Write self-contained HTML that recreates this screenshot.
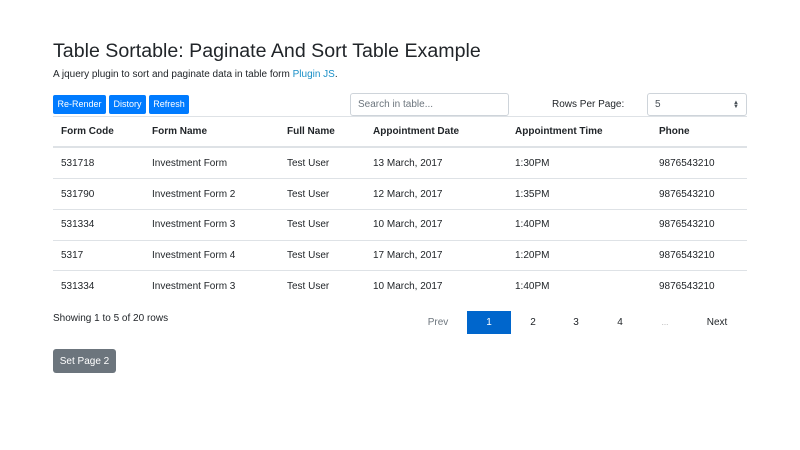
<!DOCTYPE html>
<html><head><meta charset="utf-8"><style>
*{margin:0;padding:0;box-sizing:border-box}
body{width:800px;height:450px;background:#fff;font-family:"Liberation Sans",sans-serif;color:#212529;position:relative;overflow:hidden}
.a{position:absolute;white-space:nowrap}
.btn{position:absolute;background:#007bff;color:#fff;font-size:9px;border-radius:2px;height:19px;line-height:19px;text-align:center;top:95px}
.in{position:absolute;border:1px solid #ced4da;border-radius:3px;top:93px;height:23px;font-size:10px;line-height:21px;padding-left:7px}
.hl{position:absolute;left:53px;width:694px;height:1px;background:#dee2e6}
.c{position:absolute;font-size:10px;line-height:12px;margin-top:2px}
.h{font-weight:bold}
.pg{position:absolute;top:311px;height:23px;line-height:24px;font-size:10px;text-align:center}
</style></head><body>
<div class="a" style="left:53px;top:40px;font-size:19.6px;font-weight:300">Table Sortable: Paginate And Sort Table Example</div>
<div class="a" style="left:53px;top:69px;font-size:10px">A jquery plugin to sort and paginate data in table form <span style="color:#1a8fc7">Plugin JS</span>.</div>
<div class="btn" style="left:53px;width:53px">Re-Render</div>
<div class="btn" style="left:109px;width:37px">Distory</div>
<div class="btn" style="left:149px;width:40px">Refresh</div>
<div class="in" style="left:350px;width:159px;color:#6c757d">Search in table...</div>
<div class="a" style="left:552px;top:99px;font-size:10px">Rows Per Page:</div>
<div class="in" style="left:647px;width:100px;color:#495057">5<span style="position:absolute;right:7px;font-size:6px;line-height:4px;top:7px;text-align:center">&#9650;<br>&#9660;</span></div>
<div class="hl" style="top:116px"></div>
<div class="hl" style="top:146px;height:2px"></div>
<div class="hl" style="top:178px"></div><div class="hl" style="top:209px"></div><div class="hl" style="top:240px"></div><div class="hl" style="top:270px"></div>
<div class="c h" style="left:61px;top:124px">Form Code</div>
<div class="c h" style="left:152px;top:124px">Form Name</div>
<div class="c h" style="left:287px;top:124px">Full Name</div>
<div class="c h" style="left:373px;top:124px">Appointment Date</div>
<div class="c h" style="left:515px;top:124px">Appointment Time</div>
<div class="c h" style="left:659px;top:124px">Phone</div>
<div class="c" style="left:61px;top:156px">531718</div><div class="c" style="left:152px;top:156px">Investment Form</div><div class="c" style="left:287px;top:156px">Test User</div><div class="c" style="left:373px;top:156px">13 March, 2017</div><div class="c" style="left:515px;top:156px">1:30PM</div><div class="c" style="left:659px;top:156px">9876543210</div>
<div class="c" style="left:61px;top:187px">531790</div><div class="c" style="left:152px;top:187px">Investment Form 2</div><div class="c" style="left:287px;top:187px">Test User</div><div class="c" style="left:373px;top:187px">12 March, 2017</div><div class="c" style="left:515px;top:187px">1:35PM</div><div class="c" style="left:659px;top:187px">9876543210</div>
<div class="c" style="left:61px;top:217px">531334</div><div class="c" style="left:152px;top:217px">Investment Form 3</div><div class="c" style="left:287px;top:217px">Test User</div><div class="c" style="left:373px;top:217px">10 March, 2017</div><div class="c" style="left:515px;top:217px">1:40PM</div><div class="c" style="left:659px;top:217px">9876543210</div>
<div class="c" style="left:61px;top:248px">5317</div><div class="c" style="left:152px;top:248px">Investment Form 4</div><div class="c" style="left:287px;top:248px">Test User</div><div class="c" style="left:373px;top:248px">17 March, 2017</div><div class="c" style="left:515px;top:248px">1:20PM</div><div class="c" style="left:659px;top:248px">9876543210</div>
<div class="c" style="left:61px;top:279px">531334</div><div class="c" style="left:152px;top:279px">Investment Form 3</div><div class="c" style="left:287px;top:279px">Test User</div><div class="c" style="left:373px;top:279px">10 March, 2017</div><div class="c" style="left:515px;top:279px">1:40PM</div><div class="c" style="left:659px;top:279px">9876543210</div>
<div class="c" style="left:53px;top:311px">Showing 1 to 5 of 20 rows</div>
<div class="pg" style="left:420px;width:36px;color:#6c757d">Prev</div>
<div class="pg" style="left:467px;width:44px;background:#0066cc;color:#fff">1</div>
<div class="pg" style="left:520px;width:26px">2</div>
<div class="pg" style="left:563px;width:26px">3</div>
<div class="pg" style="left:607px;width:26px">4</div>
<div class="pg" style="left:652px;width:26px;color:#aaa;font-size:8px">...</div>
<div class="pg" style="left:700px;width:34px">Next</div>
<div class="a" style="left:53px;top:349px;width:63px;height:24px;line-height:25px;text-align:center;background:#6c757d;color:#fff;font-size:10px;border-radius:3px">Set Page 2</div>
</body></html>
